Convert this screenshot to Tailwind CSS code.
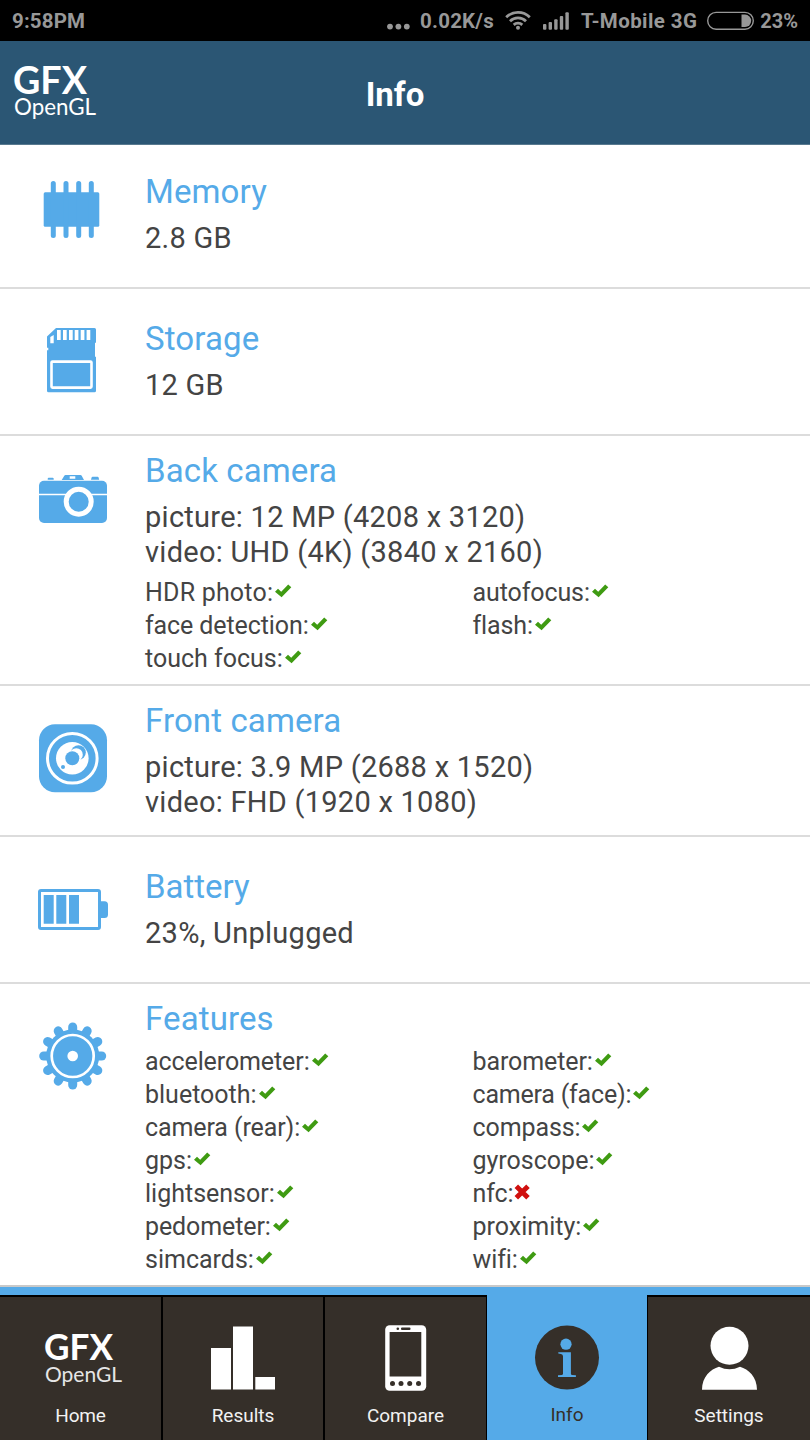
<!DOCTYPE html>
<html lang="en">
<head>
  <meta charset="UTF-8">
  <meta name="viewport" content="width=device-width, initial-scale=1.0">
  <script src="https://cdn.jsdelivr.net/npm/@tailwindcss/browser@4"></script>
  <title>Info</title>
</head>
<body class="w-[810px] h-[1440px] flex flex-col bg-white font-[Roboto,sans-serif] text-[#444] overflow-hidden">

  <svg class="hidden">
    <symbol id="check" viewBox="0 0 18 16">
      <path d="M1 8.700 4 5.800 7.200 8.800 14.200 1.600 17.300 4.300 7.600 14.300z" fill="#3f9b12"/>
    </symbol>
    <symbol id="cross" viewBox="0 0 18 16">
      <path d="M2.300 2.300 14 13.700M14 2.300 2.300 13.700" fill="none" stroke="#d0100f" stroke-width="5"/>
    </symbol>
  </svg>

  <!-- status bar -->
  <div class="h-[41px] shrink-0 bg-black text-[#989898] font-bold text-[20.5px] leading-[42px] flex items-center pl-3 pr-3">
    <span class="tracking-[0.15px]">9:58PM</span>
    <svg class="ml-auto w-[23px] h-[41px] shrink-0" viewBox="0 0 23 41" fill="#989898">
      <circle cx="3" cy="26.600" r="2.900"/><circle cx="11.400" cy="26.600" r="2.900"/><circle cx="19.800" cy="26.600" r="2.900"/>
    </svg>
    <span class="ml-[10px] tracking-[0.2px]">0.02K/s</span>
    <svg class="ml-[11px] w-[26px] h-[41px] shrink-0" viewBox="0 0 26 41" fill="none" stroke="#989898" stroke-width="2.8">
      <path d="M1.200 17.200a17 17 0 0 1 23.600 0M5 21.200a11.500 11.500 0 0 1 16 0M8.700 24.900a6.500 6.500 0 0 1 8.600 0"/>
      <circle cx="13" cy="27.700" r="2" fill="#989898" stroke="none"/>
    </svg>
    <svg class="ml-3 w-[26px] h-[41px] shrink-0" viewBox="0 0 26 41" fill="#989898">
      <rect x="0" y="24" width="3.400" height="5.700" rx="1"/>
      <rect x="5.600" y="22" width="3.400" height="7.700" rx="1"/>
      <rect x="11.200" y="19.300" width="3.400" height="10.400" rx="1"/>
      <rect x="16.800" y="16" width="3.400" height="13.700" rx="1"/>
      <rect x="22.400" y="12.200" width="3.400" height="17.500" rx="1"/>
    </svg>
    <span class="ml-3 tracking-[0.4px]">T-Mobile 3G</span>
    <svg class="ml-[10px] w-[47px] h-[41px] shrink-0" viewBox="0 0 47 41">
      <rect x=".7" y="12.400" width="45.600" height="16.800" rx="8.400" fill="none" stroke="#989898" stroke-width="1.400"/>
      <path d="M34.500 14.600h3.500a6.200 6.200 0 0 1 0 12.400h-3.500z" fill="#989898"/>
    </svg>
    <span class="ml-[6px] text-[20px]">23%</span>
  </div>

  <!-- header -->
  <header class="h-[104px] shrink-0 bg-[#2b5674] border-b border-[#58798f] grid grid-cols-3 text-white">
    <svg class="w-[110px] h-[103px]" viewBox="0 0 110 103" fill="#fff" font-family="Lato, sans-serif">
      <text x="13" y="53" font-size="38" font-weight="700" textLength="74" lengthAdjust="spacingAndGlyphs">GFX</text>
      <text x="14" y="74" font-size="22.500" textLength="82" lengthAdjust="spacingAndGlyphs">OpenGL</text>
    </svg>
    <h1 class="text-center font-bold text-[33px] leading-[107px] pr-5">Info</h1>
  </header>

  <main class="shrink-0">
    <section class="h-[144px] flex border-b-2 border-[#dcdcdc]">
      <svg class="ml-9 mt-[29px] mr-[35px] w-[74px] h-[72px]" viewBox="0 0 74 72" fill="#55aae8">
        <rect x="7.700" y="18.300" width="55.600" height="34.500" rx="1.500"/>
        <path d="M17.300 9.500v52M30 9.500v52M42.700 9.500v52M55.300 9.500v52" stroke="#55aae8" stroke-width="5" stroke-linecap="round"/>
      </svg>
      <div class="pt-[27px]">
        <h2 class="text-[#55aae8] text-[33px] leading-[39px] tracking-[0.12px]">Memory</h2>
        <p class="mt-[10px] text-[29px] leading-[34.5px] tracking-[0.27px]">2.8 GB</p>
      </div>
    </section>

    <section class="h-[147px] flex border-b-2 border-[#dcdcdc]">
      <svg class="ml-9 mt-[35px] mr-[35px] w-[74px] h-[72px]" viewBox="0 0 74 72" fill="#55aae8">
        <path d="M20 4h38.500q1.500 0 1.500 1.500v13.200h-1v14h1v34q0 1.500-1.500 1.500h-46q-1.500 0-1.500-1.500V26.300h1.300v-2.600H11V12.500z"/>
        <path d="M14.300 13l3.400-2v8.300h-3.400zM21 6h3.700v10H21zM27 6h3.700v10H27zM33 6h3.700v10H33zM38.700 6h3.700v10h-3.700zM44.700 6h3.700v10h-3.700zM50.600 6h3.700v10h-3.700z" fill="#fff"/>
        <rect x="15.500" y="37.600" width="40" height="26" rx="1" fill="none" stroke="#fff" stroke-width="2.600"/>
      </svg>
      <div class="pt-[30px]">
        <h2 class="text-[#55aae8] text-[33px] leading-[39px] tracking-[0.12px]">Storage</h2>
        <p class="mt-[10px] text-[29px] leading-[34.5px] tracking-[0.27px]">12 GB</p>
      </div>
    </section>

    <section class="h-[250px] flex border-b-2 border-[#dcdcdc]">
      <svg class="ml-9 mt-[26px] mr-[35px] w-[74px] h-[72px] shrink-0" viewBox="0 0 74 72" fill="#55aae8">
        <rect x="3" y="18.700" width="68" height="42.300" rx="5"/>
        <path d="M11.700 17.700v-1q0-1 1-1h4q1 0 1 1v1zM55 17.700l.6-2.200q.2-.7 1-.7h5q.8 0 1 .7l.6 2.200zM25.700 18l2.600-4.300q.4-.7 1.200-.7h15q.8 0 1.200.7l2.300 4.300z"/>
        <path d="M33.700 14.300h5.600v2.400h-5.600zM3 31.800h68v1.500H3z" fill="#fff"/>
        <circle cx="42.700" cy="39.700" r="12.500" stroke="#fff" stroke-width="5"/>
      </svg>
      <div class="pt-[15px] flex-1">
        <h2 class="text-[#55aae8] text-[33px] leading-[39px] tracking-[0.12px]">Back camera</h2>
        <p class="mt-[10px] text-[29px] leading-[34.5px] tracking-[0.27px]">picture: 12 MP (4208 x 3120)<br>video: UHD (4K) (3840 x 2160)</p>
        <ul class="mt-[7px] grid grid-cols-[327.5px_1fr] text-[25px] leading-[33px] tracking-[-0.1px]">
          <li class="flex"><span class="tracking-[0.2px]">HDR photo:</span><svg class="w-[18px] h-4 mt-[7px] ml-px"><use href="#check"/></svg></li>
          <li class="flex"><span>autofocus:</span><svg class="w-[18px] h-4 mt-[7px] ml-px"><use href="#check"/></svg></li>
          <li class="flex"><span>face detection:</span><svg class="w-[18px] h-4 mt-[7px] ml-px"><use href="#check"/></svg></li>
          <li class="flex"><span>flash:</span><svg class="w-[18px] h-4 mt-[7px] ml-px"><use href="#check"/></svg></li>
          <li class="flex"><span class="tracking-[0px]">touch focus:</span><svg class="w-[18px] h-4 mt-[7px] ml-px"><use href="#check"/></svg></li>
        </ul>
      </div>
    </section>

    <section class="h-[151px] flex border-b-2 border-[#dcdcdc]">
      <svg class="ml-9 mt-9 mr-[35px] w-[74px] h-[72px]" viewBox="0 0 74 72" fill="#55aae8">
        <rect x="3" y="2.300" width="68" height="68" rx="16"/>
        <circle cx="36.300" cy="36.300" r="24.800" stroke="#fff" stroke-width="3"/>
        <circle cx="36.300" cy="36.300" r="16.300" fill="#fff"/>
        <circle cx="42.500" cy="30.500" r="7.300"/>
        <circle cx="40.300" cy="32.700" r="6.500" fill="#fff"/>
        <circle cx="36.300" cy="36.300" r="7"/>
        <circle cx="27" cy="45" r="2"/>
      </svg>
      <div class="pt-[15px]">
        <h2 class="text-[#55aae8] text-[33px] leading-[39px] tracking-[0.12px]">Front camera</h2>
        <p class="mt-[10px] text-[29px] leading-[34.5px] tracking-[0.27px]">picture: 3.9 MP (2688 x 1520)<br>video: FHD (1920 x 1080)</p>
      </div>
    </section>

    <section class="h-[147px] flex border-b-2 border-[#dcdcdc]">
      <svg class="ml-9 mt-9 mr-[35px] w-[74px] h-[72px]" viewBox="0 0 74 72" fill="#55aae8">
        <rect x="3.500" y="17.500" width="60" height="38" rx="1.500" fill="none" stroke="#55aae8" stroke-width="3"/>
        <path d="M7.700 22h10v28.700h-10zM20.300 22h10v28.700h-10zM33 22h10v28.700H33zM65 28.300h3.500q3.500 0 3.500 3.500v9.700q0 3.500-3.500 3.500H65z"/>
      </svg>
      <div class="pt-[30px]">
        <h2 class="text-[#55aae8] text-[33px] leading-[39px]">Battery</h2>
        <p class="mt-[10px] text-[29px] leading-[34.5px] tracking-[0.27px]">23%, Unplugged</p>
      </div>
    </section>

    <section class="h-[303px] flex border-b-2 border-[#c9c9c9]">
      <svg class="ml-9 mt-9 mr-[35px] w-[74px] h-[72px] shrink-0" viewBox="0 0 74 72" fill="#55aae8">
        <g stroke="#55aae8" stroke-width="9" stroke-linecap="round">
          <path d="M36.700 7v58"/>
          <path d="M36.700 7v58" transform="rotate(30 36.700 36)"/>
          <path d="M36.700 7v58" transform="rotate(60 36.700 36)"/>
          <path d="M36.700 7v58" transform="rotate(90 36.700 36)"/>
          <path d="M36.700 7v58" transform="rotate(120 36.700 36)"/>
          <path d="M36.700 7v58" transform="rotate(150 36.700 36)"/>
        </g>
        <circle cx="36.700" cy="36" r="26.500"/>
        <circle cx="36.700" cy="36" r="21" stroke="#fff" stroke-width="2.700"/>
        <circle cx="36.700" cy="36" r="5.300" fill="#fff"/>
      </svg>
      <div class="pt-[15px] flex-1">
        <h2 class="text-[#55aae8] text-[33px] leading-[39px] tracking-[0.12px]">Features</h2>
        <ul class="mt-[7px] grid grid-cols-[327.5px_1fr] text-[25px] leading-[33px] tracking-[-0.1px]">
          <li class="flex"><span>accelerometer:</span><svg class="w-[18px] h-4 mt-[7px] ml-px"><use href="#check"/></svg></li>
          <li class="flex"><span>barometer:</span><svg class="w-[18px] h-4 mt-[7px] ml-px"><use href="#check"/></svg></li>
          <li class="flex"><span class="tracking-[0px]">bluetooth:</span><svg class="w-[18px] h-4 mt-[7px] ml-px"><use href="#check"/></svg></li>
          <li class="flex"><span class="tracking-[-0.2px]">camera (face):</span><svg class="w-[18px] h-4 mt-[7px] ml-px"><use href="#check"/></svg></li>
          <li class="flex"><span>camera (rear):</span><svg class="w-[18px] h-4 mt-[7px] ml-px"><use href="#check"/></svg></li>
          <li class="flex"><span>compass:</span><svg class="w-[18px] h-4 mt-[7px] ml-px"><use href="#check"/></svg></li>
          <li class="flex"><span class="tracking-[0px]">gps:</span><svg class="w-[18px] h-4 mt-[7px] ml-px"><use href="#check"/></svg></li>
          <li class="flex"><span class="tracking-[0px]">gyroscope:</span><svg class="w-[18px] h-4 mt-[7px] ml-px"><use href="#check"/></svg></li>
          <li class="flex"><span class="tracking-[0px]">lightsensor:</span><svg class="w-[18px] h-4 mt-[7px] ml-px"><use href="#check"/></svg></li>
          <li class="flex"><span>nfc:</span><svg class="w-[18px] h-4 mt-[7px] ml-px"><use href="#cross"/></svg></li>
          <li class="flex"><span>pedometer:</span><svg class="w-[18px] h-4 mt-[7px] ml-px"><use href="#check"/></svg></li>
          <li class="flex"><span class="tracking-[0px]">proximity:</span><svg class="w-[18px] h-4 mt-[7px] ml-px"><use href="#check"/></svg></li>
          <li class="flex"><span class="tracking-[0px]">simcards:</span><svg class="w-[18px] h-4 mt-[7px] ml-px"><use href="#check"/></svg></li>
          <li class="flex"><span>wifi:</span><svg class="w-[18px] h-4 mt-[7px] ml-px"><use href="#check"/></svg></li>
        </ul>
      </div>
    </section>
  </main>

  <!-- tab bar -->
  <nav class="flex-1 bg-[#55aae8] pt-2 grid grid-cols-[162px_162px_163px_160px_163px] text-[19px] leading-6 text-center text-[#f2f2f2]">
    <a class="bg-[#352f29] border-t-2 border-r border-black flex flex-col items-center">
      <svg class="mt-[22px] w-[90px] h-[85px]" viewBox="0 0 90 85" fill="#fff" font-family="Lato, sans-serif">
        <text x="8" y="40.500" font-size="36" font-weight="700" textLength="69" lengthAdjust="spacingAndGlyphs">GFX</text>
        <text x="9" y="63" font-size="21" textLength="77" lengthAdjust="spacingAndGlyphs" fill="#e6e6e6">OpenGL</text>
      </svg>
      <span class="tracking-[-0.2px]">Home</span>
    </a>
    <a class="bg-[#352f29] border-t-2 border-x border-black flex flex-col items-center">
      <svg class="mt-[22px] w-[90px] h-[85px]" viewBox="0 0 90 85" fill="#fff">
        <path d="M13 29h20v41.500H13zM35 7.500h20v63H35zM57.300 58h19.700v12.500H57.300z"/>
      </svg>
      <span>Results</span>
    </a>
    <a class="bg-[#352f29] border-t-2 border-x border-black flex flex-col items-center">
      <svg class="mt-[22px] w-[90px] h-[85px]" viewBox="0 0 90 85" fill="#352f29">
        <rect x="24.200" y="6.300" width="41" height="65.500" rx="4.500" fill="#fff"/>
        <path d="M28.600 13h31.700v44.500H28.600z"/>
        <rect x="40" y="8.500" width="9.500" height="2.500" rx="1"/>
        <circle cx="36.800" cy="9.700" r="1.300"/>
        <circle cx="31.500" cy="64.500" r="2.500"/><circle cx="40" cy="64.500" r="2.500"/><circle cx="48.700" cy="64.500" r="2.500"/><circle cx="57.500" cy="64.500" r="2.500"/>
      </svg>
      <span>Compare</span>
    </a>
    <a class="flex flex-col items-center text-[#352f29]">
      <svg class="mt-[23px] w-[90px] h-[85px]" viewBox="0 0 90 85" fill="#55aae8">
        <circle cx="45" cy="39.600" r="32" fill="#352f29"/>
        <circle cx="44" cy="26.200" r="5.600"/>
        <path d="M36.300 34.300h12.600v21.500q0 1 1 1.100l4 .4v1.600H36v-1.600l4-.4q1-.1 1-1.100V38.300q0-2-2-2.300l-2.700-.5z"/>
      </svg>
      <span>Info</span>
    </a>
    <a class="bg-[#352f29] border-t-2 border-l border-black flex flex-col items-center">
      <svg class="mt-[22px] w-[90px] h-[85px]" viewBox="0 0 90 85" fill="#fff">
        <path d="M18 70.700C18 58 26.500 50 35 47.700Q45.500 53 56 47.700C64.500 50 73 58 73 70.700z"/>
        <circle cx="45.500" cy="26.800" r="19"/>
      </svg>
      <span>Settings</span>
    </a>
  </nav>
</body>
</html>
